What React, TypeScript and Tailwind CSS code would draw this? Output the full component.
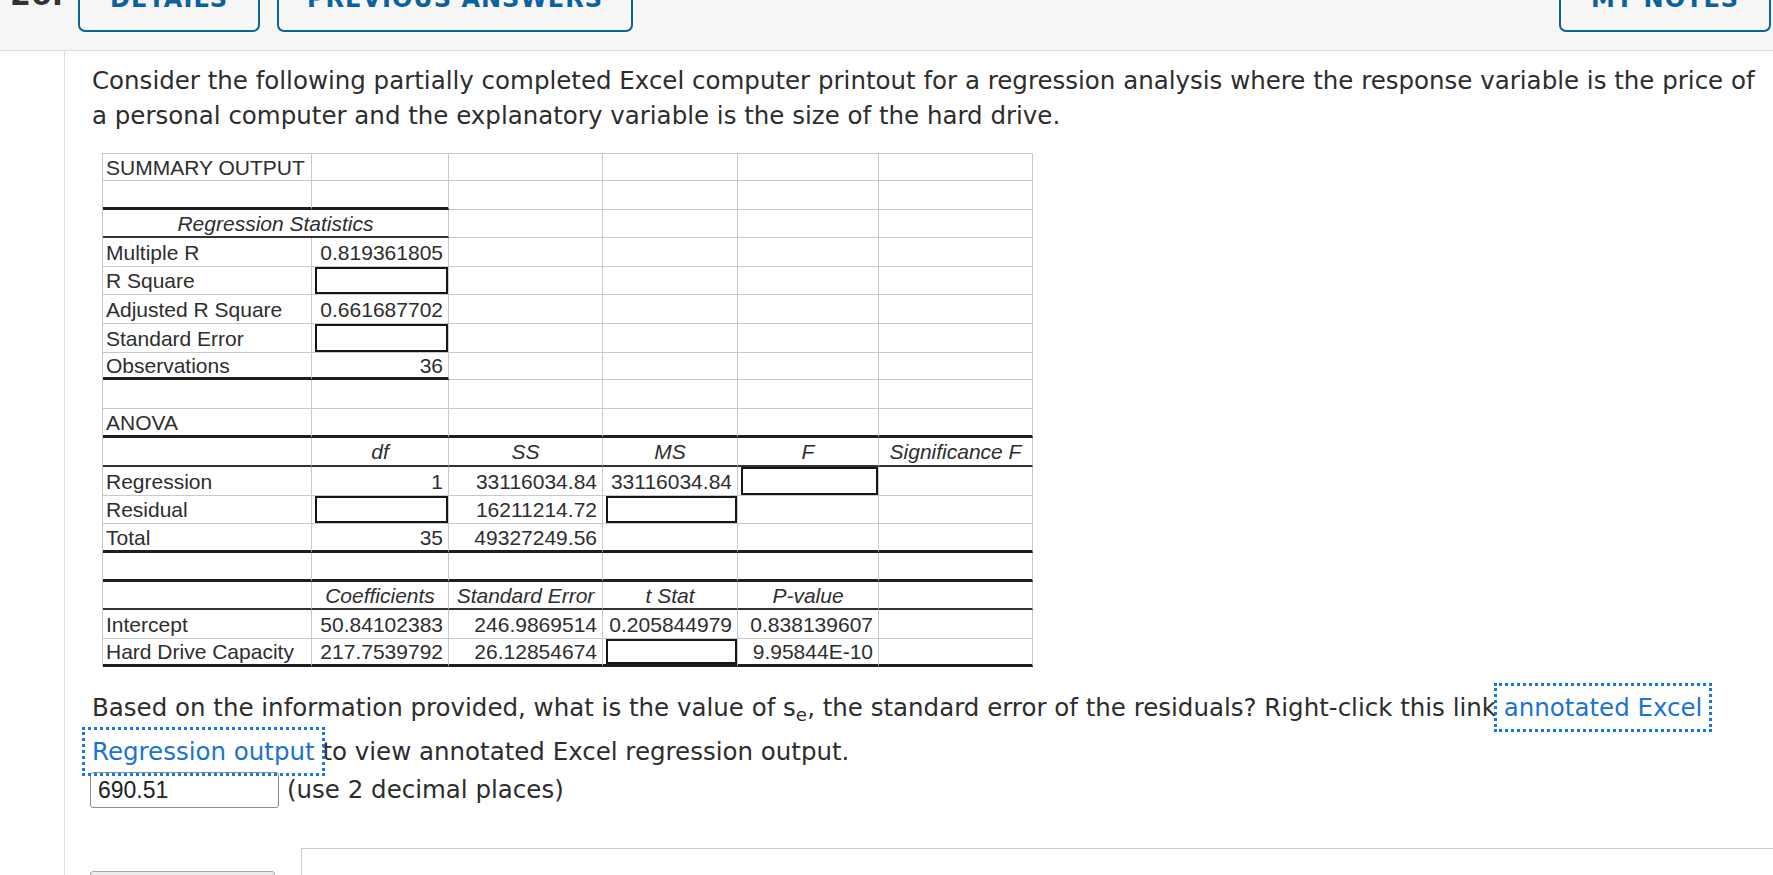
import React from "react";

type CellSpec = {
  text?: string;
  align?: "left" | "right" | "center";
  italic?: boolean;
  box?: boolean;
};

type RowSpec = {
  h: string;
  cells: CellSpec[];
  merged?: string;
  bottom?: "thick" | "dark";
  bottomSpan?: number;
};

const colWidths = ["w-[209px]", "w-[137px]", "w-[154px]", "w-[135px]", "w-[141px]", "w-[154px]"];

const L = (text: string): CellSpec => ({ text, align: "left" });
const N = (text: string): CellSpec => ({ text, align: "right" });
const H = (text: string): CellSpec => ({ text, align: "center", italic: true });
const B: CellSpec = { box: true };
const E: CellSpec = {};
const blank = [E, E, E, E, E, E];

const rows: RowSpec[] = [
  { h: "h-[27px]", cells: [L("SUMMARY OUTPUT"), E, E, E, E, E] },
  { h: "h-[29px]", cells: blank, bottom: "thick", bottomSpan: 2 },
  { h: "h-[28px]", cells: [E, E, E, E, E, E], merged: "Regression Statistics", bottom: "dark", bottomSpan: 2 },
  { h: "h-[29px]", cells: [L("Multiple R"), N("0.819361805"), E, E, E, E] },
  { h: "h-[28px]", cells: [L("R Square"), B, E, E, E, E] },
  { h: "h-[29px]", cells: [L("Adjusted R Square"), N("0.661687702"), E, E, E, E] },
  { h: "h-[29px]", cells: [L("Standard Error"), B, E, E, E, E] },
  { h: "h-[27px]", cells: [L("Observations"), N("36"), E, E, E, E], bottom: "thick", bottomSpan: 2 },
  { h: "h-[29px]", cells: blank },
  { h: "h-[29px]", cells: [L("ANOVA"), E, E, E, E, E], bottom: "thick", bottomSpan: 6 },
  { h: "h-[29px]", cells: [E, H("df"), H("SS"), H("MS"), H("F"), H("Significance F")], bottom: "dark", bottomSpan: 6 },
  { h: "h-[29px]", cells: [L("Regression"), N("1"), N("33116034.84"), N("33116034.84"), B, E] },
  { h: "h-[28px]", cells: [L("Residual"), B, N("16211214.72"), B, E, E] },
  { h: "h-[29px]", cells: [L("Total"), N("35"), N("49327249.56"), E, E, E], bottom: "thick", bottomSpan: 6 },
  { h: "h-[29px]", cells: blank, bottom: "thick", bottomSpan: 6 },
  { h: "h-[28px]", cells: [E, H("Coefficients"), H("Standard Error"), H("t Stat"), H("P-value"), E], bottom: "dark", bottomSpan: 6 },
  { h: "h-[29px]", cells: [L("Intercept"), N("50.84102383"), N("246.9869514"), N("0.205844979"), N("0.838139607"), E] },
  { h: "h-[28px]", cells: [L("Hard Drive Capacity"), N("217.7539792"), N("26.12854674"), B, N("9.95844E-10"), E], bottom: "thick", bottomSpan: 6 },
];

function bottomClass(row: RowSpec, i: number) {
  if (row.bottom && i < (row.bottomSpan ?? 6)) {
    return row.bottom === "thick" ? "border-b-[3px] border-b-[#1e1e1e]" : "border-b-2 border-b-[#333]";
  }
  return "border-b border-b-[#c9c9c9]";
}

function Cell({ cell, row, i }: { cell: CellSpec; row: RowSpec; i: number }) {
  const align =
    cell.align === "right" ? "justify-end pr-[5px]" : cell.align === "center" ? "justify-center" : "pl-[3px]";
  return (
    <div
      className={`${colWidths[i]} ${bottomClass(row, i)} flex shrink-0 items-center whitespace-nowrap border-r border-r-[#c9c9c9] ${align} ${cell.italic ? "italic" : ""}`}
    >
      {cell.box ? <div className="h-full w-full border-2 border-[#151515]" /> : cell.text}
    </div>
  );
}

function SummaryTable() {
  return (
    <div className="ml-[37px] mt-[20px] w-fit border-l border-t border-[#c9c9c9] font-['Liberation_Sans',Arial,sans-serif] text-[21px] leading-none text-[#2e2e2e]">
      {rows.map((row, r) => (
        <div key={r} className={`flex ${row.h}`}>
          {row.merged ? (
            <>
              <div className={`flex w-[346px] shrink-0 items-center justify-center border-r border-r-[#c9c9c9] italic ${bottomClass(row, 0)}`}>
                {row.merged}
              </div>
              {row.cells.slice(2).map((c, i) => (
                <Cell key={i + 2} cell={c} row={row} i={i + 2} />
              ))}
            </>
          ) : (
            row.cells.map((c, i) => <Cell key={i} cell={c} row={row} i={i} />)
          )}
        </div>
      ))}
    </div>
  );
}

function TabButton({ label, className }: { label: string; className: string }) {
  return (
    <button
      className={`-mt-[34px] flex h-[66px] shrink-0 items-center justify-center rounded-[7px] border-2 border-[#0b629c] text-[24px] font-semibold tracking-[1px] text-[#0b629c] ${className}`}
    >
      {label}
    </button>
  );
}

export default function App() {
  return (
    <div className="h-[875px] w-[1773px] overflow-hidden bg-white font-['DejaVu_Sans',Verdana,sans-serif] text-[#2d2d2d]">
      {/* header strip, scrolled partly out of view */}
      <header className="flex h-[51px] border-b border-[#dddddd] bg-[#f6f6f6]">
        <div className="w-[78px] shrink-0 pl-[10px]">
          <span className="-mt-[20px] block text-[30px] font-bold leading-[30px] text-[#333]">26.</span>
        </div>
        <TabButton label="DETAILS" className="w-[182px]" />
        <TabButton label="PREVIOUS ANSWERS" className="ml-[17px] w-[356px]" />
        <div className="flex-1" />
        <TabButton label="MY NOTES" className="mr-[2px] w-[212px]" />
      </header>

      <div className="flex h-[824px]">
        <div className="w-[65px] shrink-0 border-r border-[#dddddd]" />

        <main className="flex-1">
          <p className="pl-[27px] pt-[12px] text-[24.5px] leading-[35px] whitespace-nowrap">
            Consider the following partially completed Excel computer printout for a regression analysis where the response variable is the price of
            <br />a personal computer and the explanatory variable is the size of the hard drive.
          </p>

          <SummaryTable />

          <p className="mt-[19px] pl-[27px] text-[24.5px] leading-[44px] whitespace-nowrap">
            Based on the information provided, what is the value of s<sub>e</sub>, the standard error of the residuals? Right-click this link{" "}
            <a className="text-[#1a73d2] outline-3 outline-offset-[7px] outline-dotted outline-[#1479e0]">annotated Excel</a>
            <br />
            <a className="text-[#1a73d2] outline-3 outline-offset-[7px] outline-dotted outline-[#1479e0]">Regression output</a> to view annotated Excel regression output.
          </p>

          <div className="-mt-[2px] flex h-[36px] items-center pl-[25px]">
            <input
              readOnly
              value="690.51"
              className="h-[36px] w-[189px] rounded-[3px] border border-[#8e8e8e] px-[7px] font-['Liberation_Sans',Arial,sans-serif] text-[23px] text-[#222]"
            />
            <span className="ml-[8px] text-[24.5px]">(use 2 decimal places)</span>
          </div>

          <div className="mt-[40px] flex">
            <div className="w-[236px] shrink-0 pl-[25px] pt-[23px]">
              <div className="h-[30px] w-[185px] rounded-[3px] border border-[#a8a8a8] bg-[#ececec]" />
            </div>
            <div className="h-[40px] flex-1 border-l border-t border-[#cccccc]" />
          </div>
        </main>
      </div>
    </div>
  );
}
